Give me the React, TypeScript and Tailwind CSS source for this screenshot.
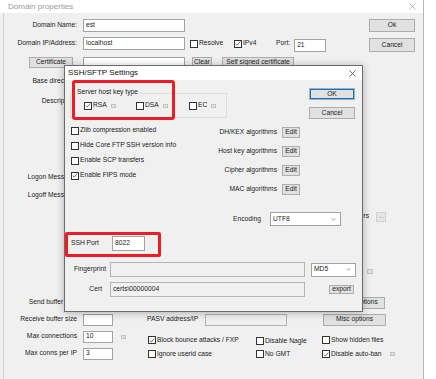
import React from 'react';

const Check = ({ checked = false }: { checked?: boolean }) => (
  <span className="w-[8px] h-[8px] border border-[#333333] bg-white flex items-center justify-center shrink-0">
    {checked && (
      <svg viewBox="0 0 8 8" className="w-[7px] h-[7px]">
        <path d="M1 4.2 L3 6.2 L7 1.4" stroke="#2a2a2a" strokeWidth="0.9" fill="none" />
      </svg>
    )}
  </span>
);

const CheckLabel = ({ checked = false, label, className = '' }: { checked?: boolean; label: string; className?: string }) => (
  <span className={`flex items-center shrink-0 ${className}`}>
    <Check checked={checked} />
    <span className="pl-[1px] whitespace-nowrap">{label}</span>
  </span>
);

const Tiny = ({ className = '' }: { className?: string }) => (
  <span className={`w-[5px] h-[4px] border border-[#c2c2c2] bg-[#e2e2e2] shrink-0 ${className}`} />
);

const Btn = ({ children, className = '' }: { children?: React.ReactNode; className?: string }) => (
  <div className={`bg-[#e1e1e1] border border-[#adadad] flex items-center justify-center whitespace-nowrap overflow-hidden shrink-0 ${className}`}>
    {children}
  </div>
);

const Edit = ({ value = '', className = '' }: { value?: string; className?: string }) => (
  <div className={`bg-white border border-[#a3a3a3] flex items-center px-[2px] whitespace-nowrap overflow-hidden shrink-0 ${className}`}>
    {value}
  </div>
);

const Dim = ({ value = '', className = '' }: { value?: string; className?: string }) => (
  <div className={`bg-[#f0f0f0] border border-[#b4b4b4] flex items-center px-[2px] whitespace-nowrap overflow-hidden shrink-0 ${className}`}>
    {value}
  </div>
);

const Combo = ({ value, className = '' }: { value: string; className?: string }) => (
  <div className={`bg-white border border-[#a3a3a3] flex items-center justify-between pl-[2px] pr-[4px] shrink-0 ${className}`}>
    <span>{value}</span>
    <svg viewBox="0 0 6 4" className="w-[5px] h-[3px]">
      <path d="M0.5 0.5 L3 3 L5.5 0.5" stroke="#555" strokeWidth="0.8" fill="none" />
    </svg>
  </div>
);

const Close = ({ color }: { color: string }) => (
  <svg viewBox="0 0 8 8" className="w-[7px] h-[7px]">
    <path d="M0.5 0.5 L7.5 7.5 M7.5 0.5 L0.5 7.5" stroke={color} strokeWidth="0.8" />
  </svg>
);

const Lbl = ({ children, className = 'w-[73px]' }: { children: React.ReactNode; className?: string }) => (
  <span className={`text-right whitespace-nowrap shrink-0 ${className}`}>{children}</span>
);

const DomainWindow = () => (
  <div className="absolute left-0 top-0 w-[424px] h-[379px] bg-[#f0f0f0] border-r border-[#b7b7b7] flex flex-col">
    <div className="h-[13px] bg-white flex items-center justify-between pl-[8px] pr-[7px] text-[8px] text-[#9a9a9a] shrink-0">
      <span>Domain properties</span>
      <Close color="#a0a0a0" />
    </div>
    <div className="ml-[3px] border-l border-[#cfcfcf] flex flex-col pt-[6px] flex-1">
      <div className="flex items-center h-[13px]">
        <Lbl>Domain Name:</Lbl>
        <Edit value="est" className="ml-[6px] w-[102px] h-[13px]" />
        <Btn className="ml-auto mr-[8px] w-[46px] h-[13px]">Ok</Btn>
      </div>
      <div className="flex items-center h-[13px] mt-[5px]">
        <Lbl>Domain IP/Address:</Lbl>
        <Edit value="localhost" className="ml-[6px] w-[102px] h-[13px]" />
        <CheckLabel label="Resolve" className="ml-[5px] w-[44px]" />
        <CheckLabel checked label="IPv4" className="w-[42px]" />
        <span>Port:</span>
        <Edit value="21" className="ml-[4px] mt-[3px] w-[32px] h-[13px]" />
        <Btn className="ml-auto mr-[8px] mt-[3px] w-[46px] h-[14px]">Cancel</Btn>
      </div>
      <div className="flex items-center h-[11px] mt-[7px]">
        <Btn className="ml-[25px] w-[44px] h-[11px]">Certificate</Btn>
        <Edit className="ml-[10px] w-[102px] h-[12px]" />
        <Btn className="ml-[7px] w-[20px] h-[11px]">Clear</Btn>
        <Btn className="ml-[10px] w-[72px] h-[11px]">Self signed certificate</Btn>
      </div>
      <div className="flex items-center h-[13px] mt-[7px]">
        <Lbl>Base directory:</Lbl>
      </div>
      <div className="flex items-center h-[13px] mt-[7px]">
        <Lbl>Description:</Lbl>
      </div>
      <div className="flex items-center h-[13px] mt-[63px]">
        <Lbl>Logon Message:</Lbl>
      </div>
      <div className="flex items-center h-[13px] mt-[5px]">
        <Lbl>Logoff Message:</Lbl>
      </div>
      <div className="flex items-center h-[13px] mt-[8px]">
        <Lbl className="w-[365px]">IP Filters</Lbl>
        <Btn className="ml-[7px] w-[10px] h-[10px] text-[#9a9a9a] border-[#d0d0d0] bg-[#e6e6e6]">...</Btn>
      </div>
      <div className="flex items-center h-[13px] mt-[42px]">
        <Tiny className="ml-[363px] w-[6px] h-[5px]" />
      </div>
      <div className="flex mt-[16px]">
        <div className="flex flex-col w-[143px] shrink-0">
          <div className="flex items-center h-[17px]">
            <Lbl>Send buffer size</Lbl>
            <Edit className="ml-[6px] w-[30px] h-[12px]" />
          </div>
          <div className="flex items-center h-[17px]">
            <Lbl>Receive buffer size</Lbl>
            <Edit className="ml-[6px] w-[30px] h-[12px]" />
          </div>
          <div className="flex items-center h-[17px]">
            <Lbl>Max connections</Lbl>
            <Edit value="10" className="ml-[6px] w-[30px] h-[12px]" />
            <Tiny className="ml-[8px]" />
          </div>
          <div className="flex items-center h-[17px]">
            <Lbl>Max conns per IP</Lbl>
            <Edit value="3" className="ml-[6px] w-[30px] h-[12px]" />
          </div>
        </div>
        <div className="flex flex-col">
          <div className="flex items-center h-[17px]">
            <Btn className="ml-[176px] w-[62px] h-[12px]">Security options</Btn>
          </div>
          <div className="flex items-center h-[17px]">
            <span className="w-[58px] shrink-0">PASV address/IP</span>
            <Dim className="w-[82px] h-[12px]" />
            <Btn className="ml-[36px] w-[63px] h-[12px]">Misc options</Btn>
          </div>
          <div className="flex items-center h-[14px] mt-[5px] pl-[1px]">
            <CheckLabel checked label="Block bounce attacks / FXP" className="w-[108px]" />
            <CheckLabel label="Disable Nagle" className="w-[66px] mt-[2px]" />
            <CheckLabel label="Show hidden files" />
          </div>
          <div className="flex items-center h-[14px] pl-[1px]">
            <CheckLabel label="Ignore userid case" className="w-[108px]" />
            <CheckLabel label="No GMT" className="w-[66px]" />
            <CheckLabel checked label="Disable auto-ban" className="w-[68px]" />
            <Tiny />
          </div>
        </div>
      </div>
    </div>
  </div>
);

const KeyType = ({ checked = false, label, w }: { checked?: boolean; label: string; w: string }) => (
  <span className="flex items-center shrink-0">
    <Check checked={checked} />
    <span className={`pl-[1px] ${w}`}>{label}</span>
    <Tiny />
  </span>
);

const SshDialog = () => (
  <div className="absolute left-[64px] top-[65px] w-[299px] h-[247px] bg-[#f0f0f0] border border-[#6b6b6b] shadow-[0_1px_8px_rgba(0,0,0,0.28)] flex flex-col">
    <div className="h-[14px] bg-white flex items-center justify-between pl-[3px] pr-[6px] text-[8px] text-[#111] shrink-0">
      <span>SSH/SFTP Settings</span>
      <Close color="#333" />
    </div>
    <div className="flex flex-col pl-[6px]">
      <div className="flex items-start h-[43px]">
        <div className="relative ml-[-1px] mt-[13px] w-[157px] h-[25px] border border-[#dcdcdc] flex items-center pl-[13px]">
          <span className="absolute left-[5px] top-[-5px] bg-[#f0f0f0] px-[1px]">Server host key type</span>
          <span className="w-[52px] flex"><KeyType checked label="RSA" w="w-[19px]" /></span>
          <span className="w-[53px] flex"><KeyType label="DSA" w="w-[19px]" /></span>
          <KeyType label="EC" w="w-[14px]" />
        </div>
        <div className="ml-auto mr-[7px] flex flex-col">
          <Btn className="mt-[8px] w-[46px] h-[12px] border-[#0078d7] shadow-[inset_0_0_0_1px_#0078d7]">OK</Btn>
          <Btn className="mt-[7px] w-[46px] h-[12px]">Cancel</Btn>
        </div>
      </div>
      <div className="flex">
        <div className="flex flex-col w-[126px] shrink-0">
          <div className="flex items-center h-[15px]"><CheckLabel label="Zlib compression enabled" /></div>
          <div className="flex items-center h-[15px]"><CheckLabel label="Hide Core FTP SSH version info" /></div>
          <div className="flex items-center h-[15px]"><CheckLabel label="Enable SCP transfers" /></div>
          <div className="flex items-center h-[15px]"><CheckLabel checked label="Enable FIPS mode" /></div>
        </div>
        <div className="flex flex-col">
          {['DH/KEX algorithms', 'Host key algorithms', 'Cipher algorithms', 'MAC algorithms'].map(a => (
            <div key={a} className="flex items-center h-[19px]">
              <Lbl className="w-[80px]">{a}</Lbl>
              <Btn className="ml-[5px] w-[18px] h-[11px]">Edit</Btn>
            </div>
          ))}
        </div>
      </div>
      <div className="flex items-center h-[14px] mt-[13px]">
        <span className="ml-[162px] w-[37px] shrink-0">Encoding</span>
        <Combo value="UTF8" className="w-[71px] h-[14px]" />
      </div>
      <div className="flex items-center h-[15px] mt-[10px]">
        <span className="w-[41px] shrink-0">SSH Port</span>
        <Edit value="8022" className="w-[33px] h-[15px]" />
      </div>
      <div className="flex items-center h-[15px] mt-[11px]">
        <Lbl className="w-[35px]">Fingerprint</Lbl>
        <Dim className="ml-[4px] w-[195px] h-[15px]" />
        <Combo value="MD5" className="ml-[6px] w-[45px] h-[14px]" />
      </div>
      <div className="flex items-center h-[15px] mt-[5px]">
        <Lbl className="w-[35px] pr-[4px]">Cert</Lbl>
        <Dim value="certs\00000004" className="ml-[4px] w-[195px] h-[15px]" />
        <Btn className="ml-[24px] w-[25px] h-[9px]">export</Btn>
      </div>
    </div>
  </div>
);

export default function App() {
  return (
    <div className="relative w-[436px] h-[379px] overflow-hidden bg-white font-['Liberation_Sans',Arial,sans-serif] text-[6.7px] leading-none text-[#1a1a1a]">
      <DomainWindow />
      <SshDialog />
      <div className="absolute left-[72px] top-[80px] w-[103px] h-[40px] border-[3px] border-[#ee1c24] rounded-[3px]" />
      <div className="absolute left-[65px] top-[232px] w-[96px] h-[25px] border-[3px] border-[#ee1c24] rounded-[2px]" />
    </div>
  );
}
